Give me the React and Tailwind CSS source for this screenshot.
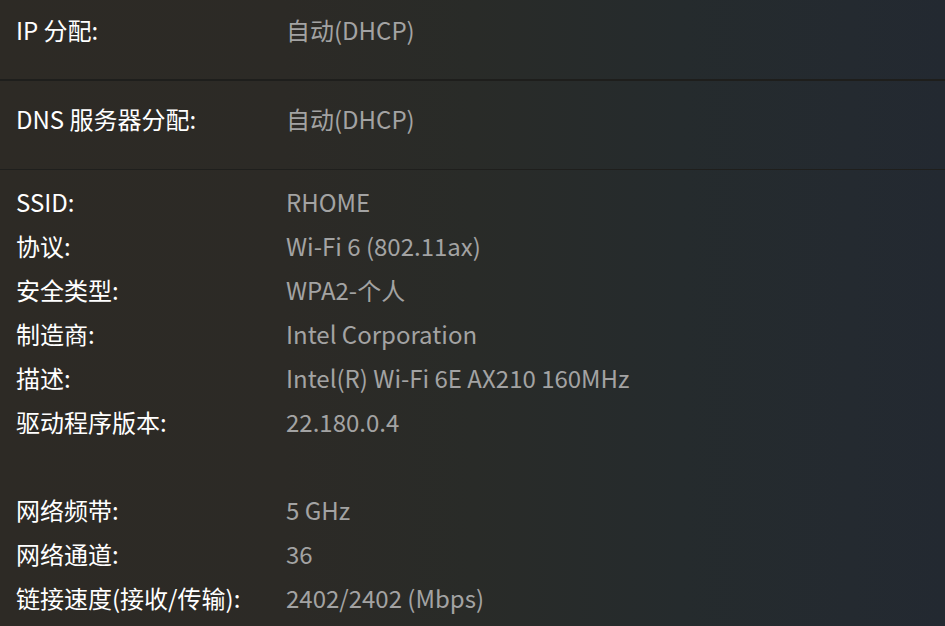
import React from 'react';

const wifiRows = [
  { label: 'SSID:', value: 'RHOME' },
  { label: '协议:', value: 'Wi-Fi 6 (802.11ax)' },
  { label: '安全类型:', value: 'WPA2-个人' },
  { label: '制造商:', value: 'Intel Corporation' },
  { label: '描述:', value: 'Intel(R) Wi-Fi 6E AX210 160MHz' },
  { label: '驱动程序版本:', value: '22.180.0.4' },
];

const bandRows = [
  { label: '网络频带:', value: '5 GHz' },
  { label: '网络通道:', value: '36' },
  { label: '链接速度(接收/传输):', value: '2402/2402 (Mbps)' },
];

const Row = ({ label, value }) => (
  <div className="flex h-[44px] items-center">
    <span className="w-[270px] shrink-0 text-[#ffffff]">{label}</span>
    <span className="text-[#a3a3a3]">{value}</span>
  </div>
);

const App = () => {
  return (
    <div
      className="h-[626px] w-full overflow-hidden bg-[linear-gradient(90deg,#2d2a25_0%,#2c2a26_30%,#292b28_50%,#252b2d_72%,#242a30_90%,#232931_100%)] pl-[16px] text-[24px] leading-[44px]"
      style={{ fontFamily: '"Noto Sans CJK SC", "Noto Sans", sans-serif' }}
    >
      {/* IP assignment */}
      <div className="-ml-[16px] h-[81px] border-b-2 border-[#1e1e1c] pl-[16px] pt-[8px]">
        <Row label="IP 分配:" value="自动(DHCP)" />
      </div>

      {/* DNS assignment */}
      <div className="-ml-[16px] h-[89px] border-b border-[#1f1f1d] pl-[16px] pt-[16px]">
        <Row label="DNS 服务器分配:" value="自动(DHCP)" />
      </div>

      {/* Wi-Fi properties */}
      <div className="pt-[10px]">
        {wifiRows.map((row) => (
          <Row key={row.label} {...row} />
        ))}
        <div className="h-[44px]" />
        {bandRows.map((row) => (
          <Row key={row.label} {...row} />
        ))}
      </div>
    </div>
  );
};

export default App;
